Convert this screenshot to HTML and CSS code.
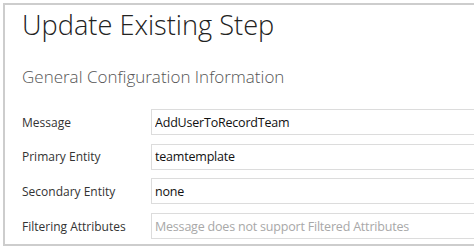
FILE: index.html
```
<html lang="en">
  <head>
    <meta charset="UTF-8" />
    <meta name="viewport" content="width=device-width, initial-scale=1.0" />
    <title>Update Existing Step</title>
    <link rel="stylesheet" href="styles.css">
  </head>
  <body>
    <div class="panel">
      <h1 class="tit">Update Existing Step</h1>
      <h2 class="section">General Configuration Information</h2>
      <!-- step fields -->
      <div class="fields">
        <label class="lbl" for="msg">Message</label>
        <input class="box" id="msg" type="text" value="AddUserToRecordTeam" />
        <label class="lbl" for="prim">Primary Entity</label>
        <input class="box" id="prim" type="text" value="teamtemplate" />
        <label class="lbl" for="sec">Secondary Entity</label>
        <input class="box" id="sec" type="text" value="none" />
        <label class="lbl" for="filt">Filtering Attributes</label>
        <input class="box" id="filt" type="text" placeholder="Message does not support Filtered Attributes" disabled />
      </div>
    </div>
  </body>
</html>
```

FILE: styles.css
```
body {
  margin: 0;
  background: #fff;
  overflow: hidden;
  font-family: "Open Sans", "Noto Sans", sans-serif;
}
.panel {
  /* the panel is cut off on the right, so no right border */
  box-sizing: border-box;
  width: 471px;
  height: 243px;
  margin: 3px 0 0 3px;
  border: 2px solid #cdcdcd;
  border-right: none;
  padding: 0 0 0 17px;
}
.tit {
  margin: 0;
  padding-top: 2px;
  font-size: 27.2px;
  font-weight: 300;
  line-height: 36px;
  color: #222;
}
.section {
  margin: 22px 0 0;
  font-size: 17px;
  font-weight: 300;
  line-height: 24px;
  color: #555;
}
.fields {
  display: grid;
  grid-template-columns: 129px 1fr;
  row-gap: 8.7px;
  margin-top: 20px;
  align-items: center;
}
.lbl {
  font-size: 12px;
  color: #333;
}
.box {
  box-sizing: border-box;
  width: 100%;
  height: 26px;
  border: 1px solid #dcdcdc;
  border-right: none;
  padding: 0 3px;
  font-family: inherit;
  font-size: 12.5px;
  letter-spacing: -0.2px;
  color: #111;
  background: #fff;
  outline: none;
}
.box::placeholder {
  color: #a8a8a8;
}
```
